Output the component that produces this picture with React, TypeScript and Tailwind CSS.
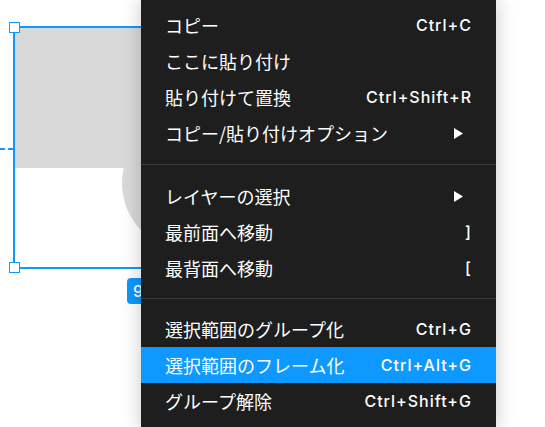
type Item = {
  label: string;
  shortcut?: string;
  submenu?: boolean;
  active?: boolean;
};

const groups: Item[][] = [
  [
    { label: "コピー", shortcut: "Ctrl+C" },
    { label: "ここに貼り付け" },
    { label: "貼り付けて置換", shortcut: "Ctrl+Shift+R" },
    { label: "コピー/貼り付けオプション", submenu: true },
  ],
  [
    { label: "レイヤーの選択", submenu: true },
    { label: "最前面へ移動", shortcut: "]" },
    { label: "最背面へ移動", shortcut: "[" },
  ],
  [
    { label: "選択範囲のグループ化", shortcut: "Ctrl+G" },
    { label: "選択範囲のフレーム化", shortcut: "Ctrl+Alt+G", active: true },
    { label: "グループ解除", shortcut: "Ctrl+Shift+G" },
  ],
];

function MenuRow({ item }: { item: Item }) {
  return (
    <div
      className={`flex h-9 items-center justify-between pl-6 pr-6 text-white ${
        item.active ? "bg-[#0d99ff]" : ""
      }`}
    >
      <span className="text-[18px] leading-none [font-family:'Noto_Sans_CJK_JP',sans-serif]">
        {item.label}
      </span>
      {item.shortcut && (
        <span className="text-[16px] font-[450] leading-none tracking-[1px] [font-family:Inter,'Noto_Sans_CJK_JP',sans-serif]">
          {item.shortcut}
        </span>
      )}
      {item.submenu && (
        <svg width="9" height="11" viewBox="0 0 9 11" className="mr-[9px]">
          <path d="M0 0 L9 5.5 L0 11 Z" fill="#fff" />
        </svg>
      )}
    </div>
  );
}

export default function App() {
  return (
    <div className="relative h-[427px] w-[545px] overflow-hidden bg-white">
      {/* canvas */}
      <div className="absolute left-[122px] top-[115px] h-[136px] w-[136px] rounded-full bg-[#d9d9d9]" />
      <div className="absolute left-[14px] top-[27px] h-[141px] w-[200px] bg-[#d9d9d9]" />
      <div className="absolute left-0 top-[148px] w-[13px] border-t-2 border-dashed border-[#0d99ff]" />
      <div className="absolute left-[13px] top-[26px] h-[243px] w-[300px] border-2 border-[#0d99ff]" />
      <div className="absolute left-[9px] top-[22px] h-[11px] w-[11px] border-[1.5px] border-[#0d99ff] bg-white" />
      <div className="absolute left-[9px] top-[262px] h-[11px] w-[11px] border-[1.5px] border-[#0d99ff] bg-white" />
      <div className="absolute left-[127px] top-[278px] flex h-[26px] w-[40px] items-center rounded-[4px] bg-[#0d99ff] pl-[6px] text-[16px] font-medium text-white [font-family:Inter,sans-serif]">
        9
      </div>

      {/* context menu */}
      <div className="absolute left-[141px] top-0 w-[355px] bg-[#1e1e1e] pb-3 pt-[7px] shadow-[0_0_18px_rgba(0,0,0,0.22)]">
        {groups.map((group, gi) => (
          <div key={gi}>
            {gi > 0 && (
              <div
                className={`h-px bg-[#3a3a3a] ${
                  gi === 1 ? "my-[13px]" : "my-[12px]"
                }`}
              />
            )}
            {group.map((item) => (
              <MenuRow key={item.label} item={item} />
            ))}
          </div>
        ))}
      </div>
    </div>
  );
}
